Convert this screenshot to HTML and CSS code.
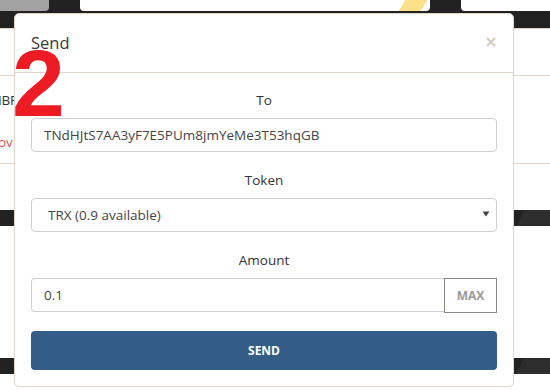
FILE: index.html
```html
<!DOCTYPE html>
<html>
<head>
<meta charset="utf-8">
<link rel="stylesheet" href="styles.css">
</head>
<body>
<div class="page">
  <div class="topbar">
    <div class="tab tab-gray"></div>
    <div class="tab-gap"></div>
    <div class="tab tab-card"><div class="slash"></div></div>
    <div class="tab-gap"></div>
    <div class="tab tab-white"></div>
  </div>
  <div class="row row1"></div>
  <div class="row row2">
    <div class="bg-text">IBFR</div>
    <div class="bg-link">ov</div>
  </div>
  <div class="row3"></div>
  <div class="darkbar"></div>
  <div class="gapblock"></div>
  <div class="darkbar"></div>
</div>

<div class="modal">
  <div class="modal-header">
    <div class="modal-title">Send</div>
    <svg class="close" width="10" height="10" viewBox="0 0 10 10"><path d="M1 1L9 9M9 1L1 9" stroke="#d6cebf" stroke-width="2.3" stroke-linecap="butt"/></svg>
  </div>
  <div class="modal-body">
    <div class="field">
      <div class="label">To</div>
      <div class="input">TNdHJtS7AA3yF7E5PUm8jmYeMe3T53hqGB</div>
    </div>
    <div class="field">
      <div class="label">Token</div>
      <div class="input select"><span class="sel-text">TRX (0.9 available)</span><svg class="caret" width="8" height="6" viewBox="0 0 8 6"><path d="M0.5 0.5H7.5L4 5.5Z" fill="#444"/></svg></div>
    </div>
    <div class="field">
      <div class="label">Amount</div>
      <div class="input-group">
        <div class="input grouped">0.1</div>
        <div class="addon">MAX</div>
      </div>
    </div>
    <div class="btn">SEND</div>
  </div>
</div>

<div class="step">2</div>
</body>
</html>
```

FILE: styles.css
```css
html, body {
  margin: 0;
  padding: 0;
}
body {
  width: 550px;
  height: 390px;
  overflow: hidden;
  position: relative;
  background: #fff;
  font-family: "Open Sans", "Liberation Sans", sans-serif;
}
.page {
  display: flex;
  flex-direction: column;
}
.topbar {
  height: 28px;
  background: #222;
  border-bottom: 1px solid #ddd6c8;
  display: flex;
  align-items: flex-start;
}
.tab {
  height: 11px;
}
.tab-gap {
  width: 31px;
}
.tab-gray {
  width: 49px;
  background: #a2a2a2;
  border-bottom-right-radius: 4px;
}
.tab-card {
  width: 350px;
  background: #fff;
  border-radius: 0 0 4px 4px;
  display: flex;
  justify-content: flex-end;
  overflow: hidden;
}
.slash {
  width: 22px;
  height: 11px;
  margin-right: 6px;
  background: #fde08a;
  transform: skewX(-32deg);
}
.tab-white {
  flex: 1;
  background: #fff;
  border-bottom-left-radius: 4px;
}
.row {
  border-bottom: 1px solid #ddd6c8;
}
.row1 {
  height: 46px;
}
.row2 {
  height: 87px;
  display: flex;
  flex-direction: column;
  font-size: 13.5px;
}
.bg-text {
  margin-top: 14px;
  margin-left: -2px;
  color: #333;
  line-height: 20px;
  letter-spacing: -0.3px;
}
.bg-link {
  margin-top: 22px;
  margin-left: -2px;
  color: #d9534f;
  line-height: 20px;
}
.row3 {
  height: 46px;
}
.darkbar {
  height: 16px;
  background: linear-gradient(115deg, #222 0%, #222 94%, #2d2d2d 94%, #2d2d2d 100%);
}
.gapblock {
  height: 132px;
}

.modal {
  position: absolute;
  left: 14px;
  top: 13px;
  width: 498px;
  background: #fff;
  border: 1px solid #ddd6c8;
  border-radius: 5px;
}
.modal-header {
  height: 58px;
  border-bottom: 1px solid #ddd6c8;
  display: flex;
  align-items: center;
  justify-content: space-between;
  padding: 0 17px 0 16px;
}
.modal-title {
  font-size: 16.5px;
  color: #383838;
  margin-top: -1px;
}
.close {
  margin-top: -2px;
}
.modal-body {
  padding: 17px 16px 16px;
  display: flex;
  flex-direction: column;
  gap: 18px;
}
.field {
  display: flex;
  flex-direction: column;
  gap: 8px;
}
.label {
  text-align: center;
  font-size: 13.5px;
  line-height: 20px;
  color: #333;
}
.input {
  height: 32px;
  border: 1px solid #ccd0d6;
  border-radius: 4px;
  padding: 0 12px;
  display: flex;
  align-items: center;
  font-size: 13.5px;
  color: #444;
}
.select {
  justify-content: space-between;
  padding: 0 6px 0 16px;
}
.caret {
  margin-top: -2px;
}
.input-group {
  display: flex;
}
.grouped {
  flex: 1;
  border-right: none;
  border-radius: 4px 0 0 4px;
}
.addon {
  width: 51px;
  height: 33px;
  border: 1px solid #8b8b85;
  display: flex;
  align-items: center;
  justify-content: center;
  font-size: 12px;
  font-weight: 700;
  color: #999;
}
.btn {
  height: 39px;
  background: #335d87;
  border-radius: 4px;
  display: flex;
  align-items: center;
  justify-content: center;
  color: #fff;
  font-size: 12px;
  font-weight: 700;
}

.step {
  position: absolute;
  left: 12px;
  top: 33px;
  font-family: "Liberation Sans", Arial, sans-serif;
  font-weight: 700;
  font-size: 95px;
  line-height: 100px;
  color: #ed1c24;
}
```
